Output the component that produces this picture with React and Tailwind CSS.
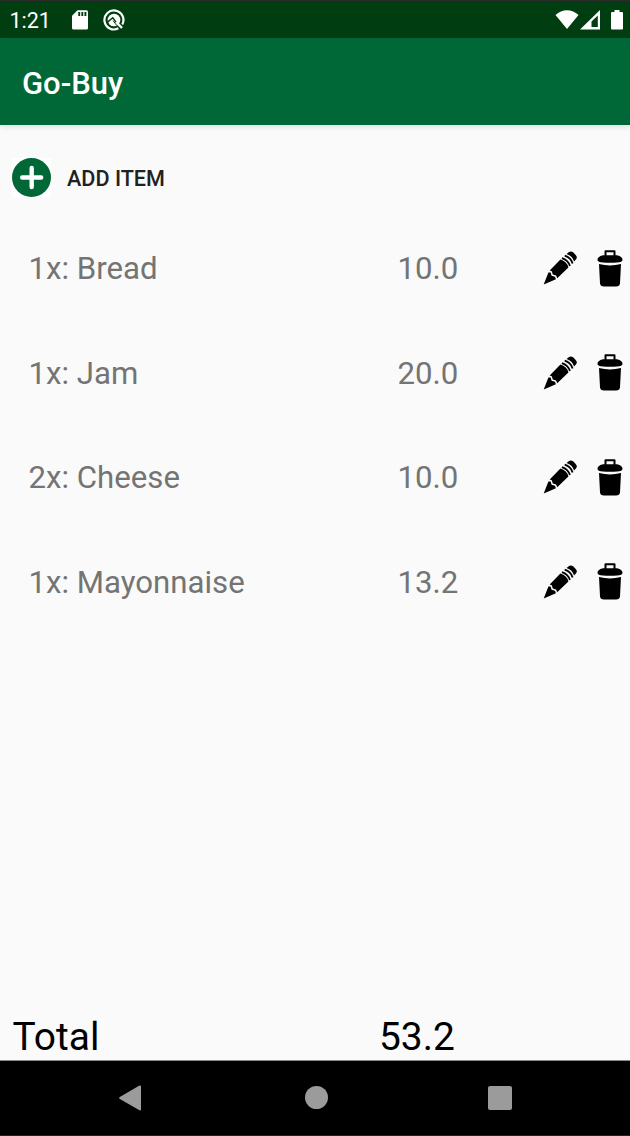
const ITEMS = [
  { name: 'Bread', count: 1, price: '10.0' },
  { name: 'Jam', count: 1, price: '20.0' },
  { name: 'Cheese', count: 2, price: '10.0' },
  { name: 'Mayonnaise', count: 1, price: '13.2' },
]

function StatusBar() {
  return (
    <header className="flex h-[38px] items-center border-t border-[#2b2b2b] bg-[#003e12] pl-[9.5px] pr-[7px] text-white">
      <span className="w-[62px] pt-0.5 text-[21.5px] leading-none">1:21</span>
      <svg className="mr-[15px] h-5 w-4" viewBox="0 0 16 20" fill="none">
        <path d="M5.5 0.2H14.5Q16 0.2 16 1.7V18Q16 19.5 14.5 19.5H1.5Q0 19.5 0 18V5.7Z" fill="white" />
        <path d="M7.2 2V6M10.3 2V6M13.4 2V6" stroke="#003e12" strokeWidth="1.9" />
      </svg>
      <svg className="h-[22px] w-[22px]" viewBox="0 0 22 22" fill="none">
        <path d="M15.4 19.3A9.5 9.5 0 1 1 19.3 15.4" stroke="white" strokeWidth="2.2" />
        <circle cx="11" cy="11" r="6.3" fill="white" />
        <path d="M4.2 13.4L9.8 8.8L14.8 15.6" stroke="#003e12" strokeWidth="1.4" />
        <path d="M10 11.6L14 16.8" stroke="#003e12" strokeWidth="1" />
        <path d="M13.2 13.2L19 19" stroke="white" strokeWidth="2.4" />
      </svg>
      <div className="ml-auto flex items-center">
        <svg className="h-5 w-6" viewBox="0 0 24 20">
          <path d="M0.5 5C7 -1.3 17 -1.3 23.5 5L12 19Z" fill="white" />
        </svg>
        <svg className="ml-px h-5 w-5" viewBox="0 0 20 20">
          <path fillRule="evenodd" d="M20 0V19.5H0ZM17.8 5.5L11.5 11.5V17H17.8Z" fill="white" />
        </svg>
        <svg className="ml-[11px] h-5 w-3" viewBox="0 0 12 20">
          <path d="M3.5 0H8.5V2H11Q12 2 12 3V18.5Q12 19.5 11 19.5H1Q0 19.5 0 18.5V3Q0 2 1 2H3.5Z" fill="white" />
        </svg>
      </div>
    </header>
  )
}

function PencilIcon() {
  return (
    <svg className="h-[34px] w-[34px]" viewBox="0 0 34 34" fill="none">
      <path d="M0.7 33.5L5.4 21.4L7.6 21.6L8.6 24.7L12 25.8L12.9 28.3Z" fill="black" />
      <path d="M6.7 19.6L17.4 8.6Q23.9 10.5 25.4 16.4L14.2 27.2L13.1 24.6L9.8 23.5L8.8 20.2Z" fill="black" />
      <path d="M18.9 7.2Q25.2 9.2 26.9 15.1M21.7 4.7Q28 6.7 29.6 12.5" stroke="black" strokeWidth="1.8" />
      <path d="M23.6 3L26 0.9Q28.2 -0.3 30.4 1.6L32.7 3.9Q34.6 5.8 33.3 7.9L31 10.4Q29.4 5 23.6 3Z" fill="black" />
    </svg>
  )
}

function TrashIcon() {
  return (
    <svg className="h-[37px] w-[26px]" viewBox="0 0 26 37" fill="none">
      <path d="M8.5 6V1.2H17.5V6" stroke="black" strokeWidth="2" strokeLinejoin="round" />
      <path d="M6 5.2H20C24 6 25.7 8 25.5 10Q25.3 12 20 12.5Q13 13.2 6 12.5Q0.7 12 0.5 10C0.3 8 2 6 6 5.2Z" fill="black" />
      <path d="M2 14.1Q13 17 24 14.1L23 33.3Q22.7 36.5 19 36.5H7Q3.3 36.5 3 33.3Z" fill="black" />
    </svg>
  )
}

function ItemRow({ name, count, price }) {
  return (
    <li className="flex h-[104.6px] items-center pl-[28.5px] pr-[7px] text-[31.2px] text-[#747474]">
      <span className="w-[369px] pt-0.5">{count}x: {name}</span>
      <span className="pt-0.5">{price}</span>
      <div className="ml-auto flex items-center gap-5 pb-px">
        <button aria-label={`Edit ${name}`}><PencilIcon /></button>
        <button aria-label={`Delete ${name}`}><TrashIcon /></button>
      </div>
    </li>
  )
}

function NavigationBar() {
  return (
    <nav className="flex h-[76px] items-center border-t border-b border-t-[#8b8b8b] border-b-[#222222] bg-black pb-px pl-[119px]">
      <svg className="h-[26px] w-[22px]" viewBox="0 0 22 26">
        <path d="M20.5 0.5Q22 0 22 1.5V24.5Q22 26 20.5 25.2L0.8 14Q-0.5 13 0.8 12Z" fill="#9b9b9b" />
      </svg>
      <div className="ml-[163.5px] h-[23px] w-[23px] rounded-full bg-[#9b9b9b]" />
      <div className="ml-[160px] h-[24px] w-[24px] rounded-[2px] bg-[#9b9b9b]" />
    </nav>
  )
}

export default function App() {
  return (
    <div className="flex h-[1136px] w-[630px] flex-col overflow-hidden bg-[#fafafa] font-['Roboto',sans-serif]">
      <StatusBar />
      <div className="flex h-[87px] shrink-0 items-center bg-[#006837] pt-[5px] pl-[22px] shadow-[0_1px_6px_rgba(0,0,0,0.15)]">
        <h1 className="text-[31px] font-medium text-white">Go-Buy</h1>
      </div>

      <main className="flex flex-1 flex-col">
        <button className="mt-[33px] flex h-[39px] items-center self-start pl-[12px]">
          <span className="bg-white">
            <svg className="h-[39px] w-[39px]" viewBox="0 0 39 39">
              <circle cx="19.5" cy="19.5" r="19.5" fill="#006837" />
              <path d="M19.7 10V29M10.2 19.5H29.2" stroke="white" strokeWidth="4.4" strokeLinecap="round" />
            </svg>
          </span>
          <span className="ml-4 pt-[3px] text-[21.6px] font-medium text-[#212121]">ADD ITEM</span>
        </button>
        <ul className="mt-[19.3px]">
          {ITEMS.map((item) => <ItemRow key={item.name} {...item} />)}
        </ul>
        <div className="mt-auto flex h-[48px] items-center pt-0.5 pl-[12.5px] text-[38.9px] text-black">
          <span className="w-[366.5px]">Total</span>
          <span>53.2</span>
        </div>
      </main>

      <NavigationBar />
    </div>
  )
}
